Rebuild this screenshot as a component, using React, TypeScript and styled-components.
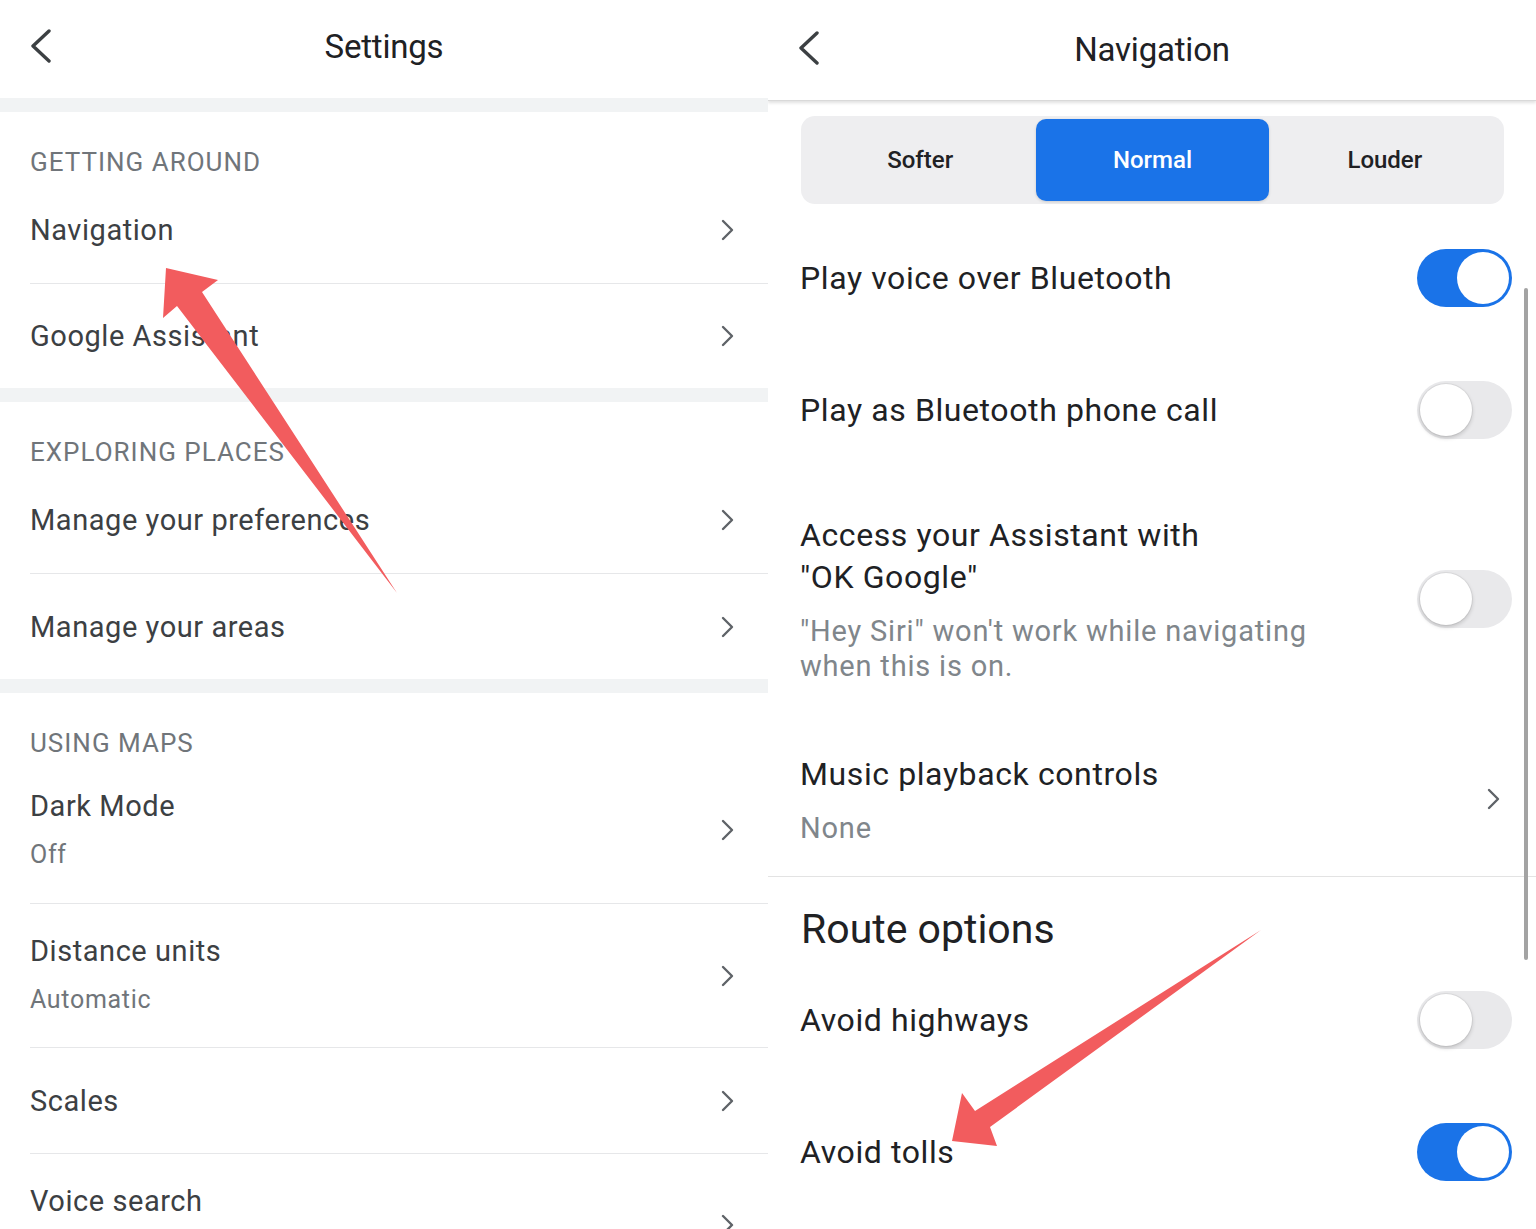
import React from 'react';
import styled, { createGlobalStyle } from 'styled-components';

const GlobalStyle = createGlobalStyle`
  html, body {
    margin: 0;
    padding: 0;
    background: #ffffff;
  }
  body {
    font-family: Roboto, "Liberation Sans", Arial, sans-serif;
  }
`;

const Page = styled.div`
  position: relative;
  display: flex;
  width: 1536px;
  height: 1229px;
  overflow: hidden;
  background: #ffffff;
`;

const Panel = styled.div`
  position: relative;
  width: 768px;
  height: 1229px;
  overflow: hidden;
  display: flex;
  flex-direction: column;
`;

/* ---------- left: Settings ---------- */

const Header = styled.div<{ $h: number; $shadow?: boolean }>`
  position: relative;
  flex: none;
  height: ${(p) => p.$h}px;
  display: flex;
  align-items: center;
  justify-content: center;
  background: #ffffff;
  ${(p) =>
    p.$shadow &&
    `border-bottom: 1px solid #d9d9d9; box-shadow: 0 2px 3px rgba(0, 0, 0, 0.12); z-index: 1;`}
`;

const HeaderTitle = styled.div<{ $top: number }>`
  font-size: 33px;
  color: #202124;
  letter-spacing: -0.2px;
  margin-top: ${(p) => p.$top}px;
`;

const BackIcon = styled.svg<{ $left: number; $top: number }>`
  position: absolute;
  left: ${(p) => p.$left}px;
  top: ${(p) => p.$top}px;
`;

const Band = styled.div`
  flex: none;
  height: 14px;
  background: #f1f3f4;
`;

const SectionLabel = styled.div`
  flex: none;
  height: 64px;
  box-sizing: border-box;
  padding: 36px 0 0 30px;
  font-size: 26px;
  line-height: 28px;
  color: #70757a;
  letter-spacing: 1px;
`;

const Row = styled.div<{ $h: number; $top?: boolean }>`
  flex: none;
  height: ${(p) => p.$h}px;
  box-sizing: border-box;
  display: flex;
  align-items: ${(p) => (p.$top ? 'flex-start' : 'center')};
  padding: ${(p) => (p.$top ? '29px' : '0')} 33px 0 30px;
`;

const RowText = styled.div`
  flex: 1;
  display: flex;
  flex-direction: column;
  gap: 13px;
`;

const ItemTitle = styled.div`
  font-size: 29px;
  line-height: 36px;
  color: #3c4043;
  letter-spacing: 0.55px;
`;

const ItemSub = styled.div`
  font-size: 25px;
  line-height: 36px;
  color: #70757a;
  letter-spacing: 0.7px;
`;

const ChevronBox = styled.div<{ $drop?: number }>`
  flex: none;
  display: flex;
  margin-top: ${(p) => p.$drop || 0}px;
`;

const Divider = styled.div<{ $inset: number }>`
  flex: none;
  height: 1px;
  margin-left: ${(p) => p.$inset}px;
  background: #e6e7e9;
`;

const Chevron = () => (
  <svg width="15" height="24" viewBox="0 0 15 24">
    <path d="M3 3 L12 12 L3 21" fill="none" stroke="#5f6368" strokeWidth="2.4" strokeLinecap="round" strokeLinejoin="round" />
  </svg>
);

const Back = ({ left, top }: { left: number; top: number }) => (
  <BackIcon $left={left} $top={top} width="24" height="34" viewBox="0 0 24 34">
    <path d="M20 2 L4 17 L20 32" fill="none" stroke="#3c4043" strokeWidth="3.4" strokeLinecap="round" strokeLinejoin="round" />
  </BackIcon>
);

/* ---------- right: Navigation ---------- */

const Segmented = styled.div`
  flex: none;
  margin: 15px 32px 0 33px;
  height: 88px;
  box-sizing: border-box;
  padding: 3px;
  border-radius: 14px;
  background: #eeeef0;
  display: grid;
  grid-template-columns: 1fr 1fr 1fr;
`;

const Segment = styled.div<{ $active?: boolean }>`
  display: flex;
  align-items: center;
  justify-content: center;
  border-radius: 10px;
  font-size: 24px;
  font-weight: 500;
  color: ${(p) => (p.$active ? '#ffffff' : '#202124')};
  background: ${(p) => (p.$active ? '#1a73e8' : 'transparent')};
  ${(p) => p.$active && 'box-shadow: 0 1px 3px rgba(0,0,0,0.15);'}
`;

const SwitchRow = styled.div<{ $h: number; $top?: number }>`
  flex: none;
  height: ${(p) => p.$h}px;
  margin-top: ${(p) => p.$top || 0}px;
  display: flex;
  align-items: center;
  padding: 0 24px 0 32px;
`;

const SwitchText = styled.div`
  flex: 1;
  display: flex;
  flex-direction: column;
  gap: 16px;
`;

const SwitchTitle = styled.div`
  font-size: 32px;
  line-height: 42px;
  color: #202124;
  letter-spacing: 0.6px;
`;

const SwitchSub = styled.div`
  font-size: 29px;
  line-height: 35px;
  color: #80868b;
  letter-spacing: 0.8px;
`;

const Toggle = styled.div<{ $on?: boolean }>`
  position: relative;
  flex: none;
  width: 95px;
  height: 58px;
  border-radius: 29px;
  background: ${(p) => (p.$on ? '#1a73e8' : '#e9e9eb')};

  &::after {
    content: '';
    position: absolute;
    top: 3px;
    left: ${(p) => (p.$on ? '40px' : '3px')};
    width: 52px;
    height: 52px;
    border-radius: 50%;
    background: #ffffff;
    box-shadow: ${(p) =>
      p.$on ? 'none' : '0 2px 4px rgba(0,0,0,0.18), 0 0 0 1px rgba(0,0,0,0.05)'};
  }
`;

const ChevronCell = styled.div`
  flex: none;
  width: 22px;
  margin-right: 8px;
  display: flex;
  justify-content: center;
`;

const FullDivider = styled.div`
  flex: none;
  height: 1px;
  background: #e3e3e3;
`;

const RouteHeader = styled.div`
  flex: none;
  height: 77px;
  box-sizing: border-box;
  padding: 32px 0 0 33px;
  font-size: 41px;
  line-height: 40px;
  color: #202124;
`;

const Scrollbar = styled.div`
  position: absolute;
  left: 756px;
  top: 288px;
  width: 4px;
  height: 672px;
  border-radius: 2px;
  background: #a3a3a3;
`;

const Overlay = styled.svg`
  position: absolute;
  left: 0;
  top: 0;
  pointer-events: none;
`;

type Item = { title: string; sub?: string; h: number; cut?: boolean };

const SettingsItem = ({ title, sub, h, cut }: Item) => (
  <Row $h={h} $top={cut}>
    <RowText>
      <ItemTitle>{title}</ItemTitle>
      {sub && <ItemSub>{sub}</ItemSub>}
    </RowText>
    <ChevronBox $drop={cut ? 30 : 0}>
      <Chevron />
    </ChevronBox>
  </Row>
);

const App: React.FC = () => {
  return (
    <Page>
      <GlobalStyle />

      <Panel>
        <Header $h={98}>
          <Back left={29} top={29} />
          <HeaderTitle $top={-6}>Settings</HeaderTitle>
        </Header>
        <Band />
        <SectionLabel>GETTING AROUND</SectionLabel>
        <SettingsItem title="Navigation" h={107} />
        <Divider $inset={30} />
        <SettingsItem title="Google Assistant" h={104} />
        <Band />
        <SectionLabel>EXPLORING PLACES</SectionLabel>
        <SettingsItem title="Manage your preferences" h={107} />
        <Divider $inset={30} />
        <SettingsItem title="Manage your areas" h={105} />
        <Band />
        <SectionLabel>USING MAPS</SectionLabel>
        <SettingsItem title="Dark Mode" sub="Off" h={146} />
        <Divider $inset={30} />
        <SettingsItem title="Distance units" sub="Automatic" h={143} />
        <Divider $inset={30} />
        <SettingsItem title="Scales" h={105} />
        <Divider $inset={30} />
        <SettingsItem title="Voice search" h={146} cut />
      </Panel>

      <Panel>
        <Header $h={100} $shadow>
          <Back left={29} top={31} />
          <HeaderTitle $top={-2}>Navigation</HeaderTitle>
        </Header>
        <Segmented>
          <Segment>Softer</Segment>
          <Segment $active>Normal</Segment>
          <Segment>Louder</Segment>
        </Segmented>

        <SwitchRow $h={132} $top={8}>
          <SwitchText>
            <SwitchTitle>Play voice over Bluetooth</SwitchTitle>
          </SwitchText>
          <Toggle $on />
        </SwitchRow>
        <SwitchRow $h={132}>
          <SwitchText>
            <SwitchTitle>Play as Bluetooth phone call</SwitchTitle>
          </SwitchText>
          <Toggle />
        </SwitchRow>
        <SwitchRow $h={246}>
          <SwitchText>
            <SwitchTitle>
              Access your Assistant with
              <br />
              "OK Google"
            </SwitchTitle>
            <SwitchSub>
              "Hey Siri" won't work while navigating
              <br />
              when this is on.
            </SwitchSub>
          </SwitchText>
          <Toggle />
        </SwitchRow>
        <SwitchRow $h={154}>
          <SwitchText>
            <SwitchTitle>Music playback controls</SwitchTitle>
            <SwitchSub>None</SwitchSub>
          </SwitchText>
          <ChevronCell>
            <Chevron />
          </ChevronCell>
        </SwitchRow>
        <FullDivider />
        <RouteHeader>Route options</RouteHeader>
        <SwitchRow $h={132}>
          <SwitchText>
            <SwitchTitle>Avoid highways</SwitchTitle>
          </SwitchText>
          <Toggle />
        </SwitchRow>
        <SwitchRow $h={132}>
          <SwitchText>
            <SwitchTitle>Avoid tolls</SwitchTitle>
          </SwitchText>
          <Toggle $on />
        </SwitchRow>
        <Scrollbar />
      </Panel>

      <Overlay width="1536" height="1229" viewBox="0 0 1536 1229">
        <polygon
          points="166,268 218,280 202,292 397,593 177,306 163,318"
          fill="#f25c5e"
        />
        <polygon
          points="952,1141 962,1093 975,1111 1261,930 990,1127 997,1146"
          fill="#f25c5e"
        />
      </Overlay>
    </Page>
  );
};

export default App;
